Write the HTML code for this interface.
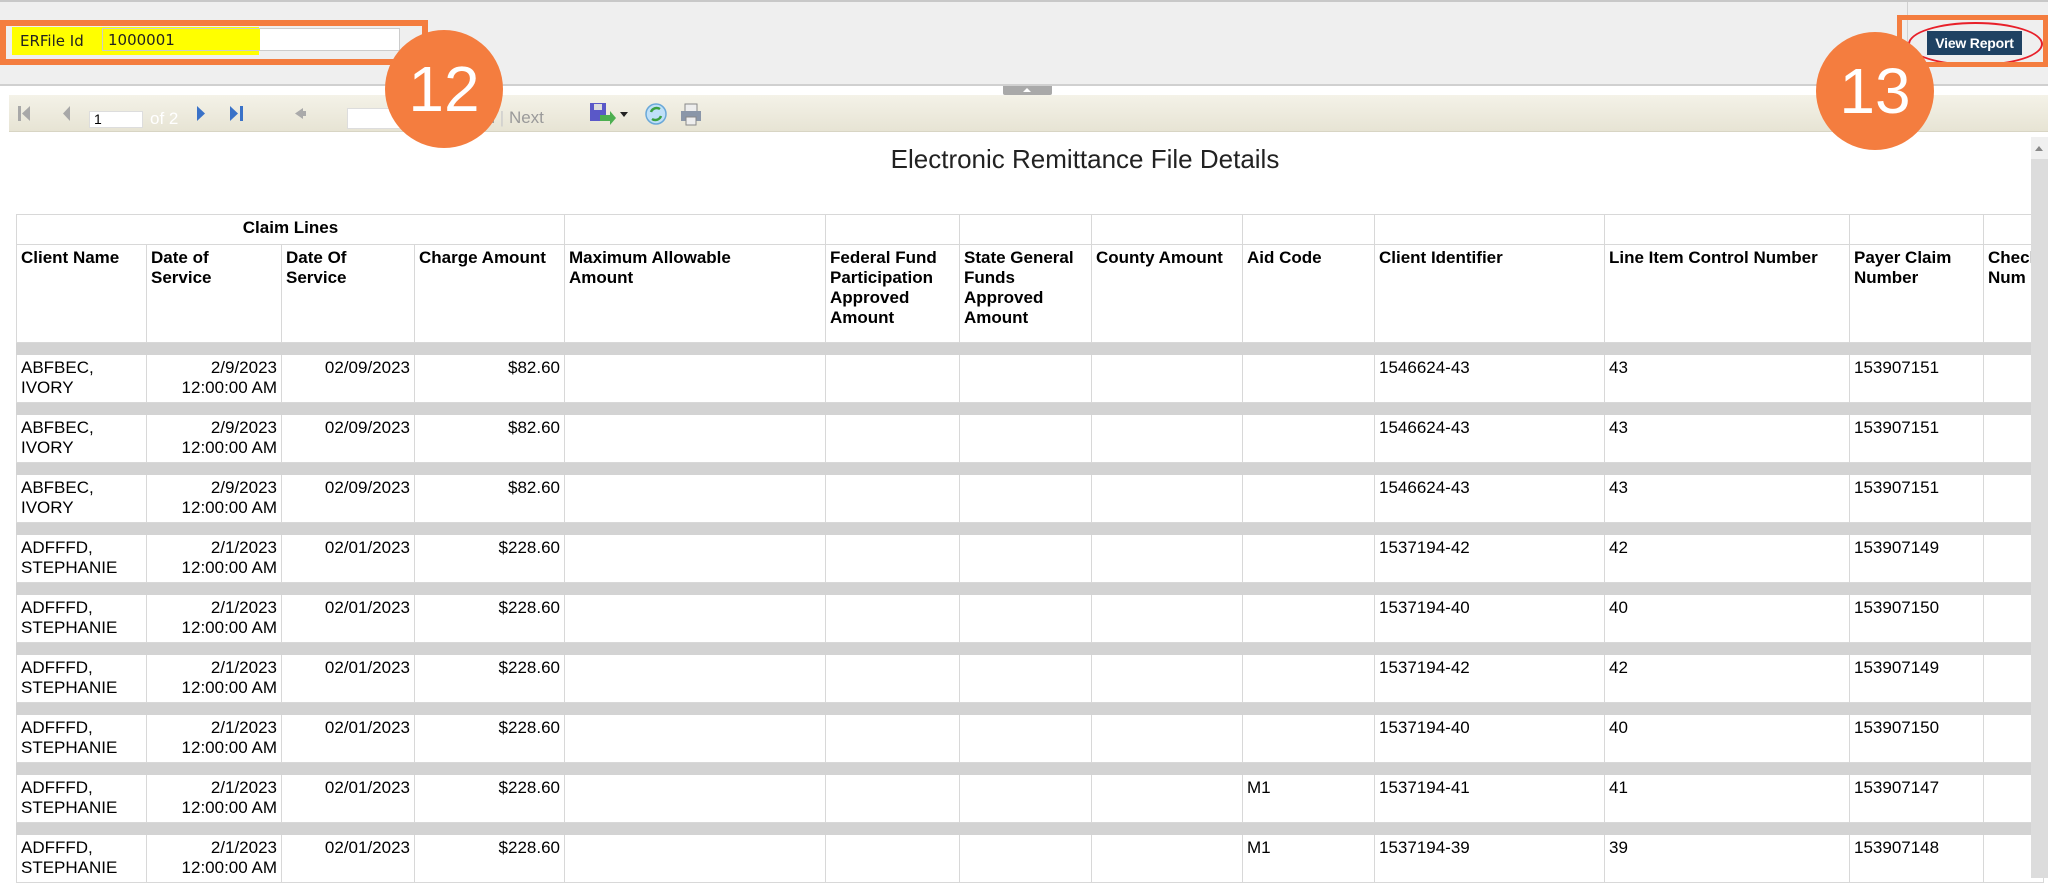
<!DOCTYPE html>
<html><head><meta charset="utf-8">
<style>
*{margin:0;padding:0;box-sizing:border-box}
body{width:2048px;height:878px;overflow:hidden;background:#fff;font-family:"Liberation Sans",Arial,sans-serif;position:relative}
.abs{position:absolute}
table{border-collapse:collapse;table-layout:fixed;position:absolute;left:16px;top:214px;font-size:17px;color:#000}
td{border:1px solid #d8d8d8;vertical-align:top;padding:3px 4px;line-height:20px;overflow:hidden;white-space:nowrap}
th{border:1px solid #d8d8d8;vertical-align:top;padding:3px 4px;line-height:20px;text-align:left;font-weight:bold;overflow:hidden;white-space:nowrap}
tr.g td{background:#d3d3d3;height:12px;padding:0;border-color:#d3d3d3}
tr.d td{height:48px}
.r{text-align:right}
.circ{position:absolute;width:118px;height:118px;border-radius:50%;background:#f47d3f;color:#fff;font-size:64px;text-align:center;line-height:118px}
</style></head><body>
<div class="abs" style="left:0;top:0;width:2048px;height:86px;background:#efefef;border-top:2px solid #c8c8c8;border-bottom:2px solid #d0d0d0"></div>
<div class="abs" style="left:1907px;top:2px;width:1px;height:58px;background:#d0d0d0"></div>
<div class="abs" style="left:1003px;top:86px;width:49px;height:9px;background:#a9a9a9;border-radius:0 0 2px 2px"></div>
<div class="abs" style="left:1023px;top:88px;width:0;height:0;border-left:4px solid transparent;border-right:4px solid transparent;border-bottom:4px solid #fff"></div>
<div class="abs" style="left:12px;top:27px;width:247px;height:28px;background:#ffff00"></div>
<div class="abs" style="left:20px;top:29px;font-size:15px;line-height:24px;color:#222;font-family:'DejaVu Sans',sans-serif">ERFile Id</div>
<div class="abs" style="left:102px;top:28px;width:298px;height:23px;border:1px solid #ccc;background:linear-gradient(90deg,#ffff00 0,#ffff00 157px,#fff 157px)"></div>
<div class="abs" style="left:108px;top:29px;font-size:15px;line-height:22px;color:#222;font-family:'DejaVu Sans',sans-serif">1000001</div>
<div class="abs" style="left:0;top:20px;width:428px;height:45px;border:6px solid #f47d3f"></div>
<div class="abs" style="left:1927px;top:31px;width:95px;height:24px;background:#1f4263;color:#fff;font-size:14px;font-weight:bold;line-height:24px;text-align:center;white-space:nowrap;letter-spacing:-0.2px">View Report</div>
<div class="abs" style="left:1908px;top:22px;width:135px;height:44px;border:2px solid #e8202a;border-radius:50%"></div>
<div class="abs" style="left:1897px;top:15px;width:151px;height:52px;border:5px solid #f47d3f;border-right:none"></div>
<div class="abs" style="left:2043px;top:15px;width:5px;height:52px;background:#f47d3f"></div>
<div class="abs" style="left:9px;top:95px;width:2039px;height:37px;background:linear-gradient(#f4f2e8,#e7e4d4);border-bottom:1px solid #d8d5c4"></div>
<svg class="abs" style="left:0;top:95px" width="720" height="37">
<g fill="#a8a8a8"><rect x="18" y="11" width="3" height="15"/><polygon points="30,11 22,18.5 30,26"/><polygon points="70,11 63,18.5 70,26"/></g>
<g fill="#3a72c8"><polygon points="197,11 205,18.5 197,26"/><polygon points="230,11 238,18.5 230,26"/><rect x="240" y="11" width="3" height="15"/></g>
<polygon points="303,13 295,18.5 303,24" fill="#aaa"/><rect x="301" y="16" width="5" height="5" fill="#aaa"/>
<rect x="590" y="8" width="16" height="18" fill="#5a58c8"/><rect x="594" y="9" width="8" height="6" fill="#ddd"/><polygon points="600,20 610,20 610,16 616,23 610,30 610,26 600,26" fill="#4caf50"/>
<polygon points="620,17 628,17 624,22" fill="#222"/>
<circle cx="656" cy="19" r="10" fill="#bfe0f8" stroke="#6aa8d8" stroke-width="1.5"/><path d="M651 17 a6 6 0 0 1 9 -3 M661 21 a6 6 0 0 1 -9 3" stroke="#3aa040" stroke-width="2.5" fill="none"/>
<rect x="685" y="9" width="12" height="8" fill="#eee" stroke="#888"/><rect x="681" y="16" width="20" height="10" fill="#8a96a8"/><rect x="686" y="22" width="10" height="8" fill="#eee" stroke="#888"/>
</svg>
<div class="abs" style="left:89px;top:111px;width:54px;height:17px;background:#fff;border:1px solid #ddd;font-size:14px;line-height:15px;padding-left:4px">1</div>
<div class="abs" style="left:150px;top:108px;font-size:17px;color:#fff;line-height:22px">of 2</div>
<div class="abs" style="left:347px;top:108px;width:110px;height:21px;background:#fff;border:1px solid #ddd"></div>
<div class="abs" style="left:462px;top:107px;font-size:17px;color:#9a9a9a;line-height:22px">Find <span style="color:#ccc">|</span> Next</div>
<div class="circ" style="left:385px;top:30px">12</div>
<div class="circ" style="left:1816px;top:32px">13</div>
<div class="abs" style="left:0;top:143px;width:2170px;text-align:center;font-size:26px;color:#222;line-height:32px">Electronic Remittance File Details</div>
<table>
<colgroup><col style="width:130px"><col style="width:135px"><col style="width:133px"><col style="width:150px"><col style="width:261px"><col style="width:134px"><col style="width:132px"><col style="width:151px"><col style="width:132px"><col style="width:230px"><col style="width:245px"><col style="width:134px"><col style="width:60px"></colgroup>
<tr style="height:30px"><th colspan="4" style="text-align:center">Claim Lines</th><th></th><th></th><th></th><th></th><th></th><th></th><th></th><th></th><th></th></tr>
<tr style="height:98px"><th>Client Name</th><th>Date of<br>Service</th><th>Date Of<br>Service</th><th>Charge Amount</th><th>Maximum Allowable<br>Amount</th><th>Federal Fund<br>Participation<br>Approved<br>Amount</th><th>State General<br>Funds<br>Approved<br>Amount</th><th>County Amount</th><th>Aid Code</th><th>Client Identifier</th><th>Line Item Control Number</th><th>Payer Claim<br>Number</th><th>Check<br>Num</th></tr>
<tr class="g"><td colspan="13"></td></tr>
<tr class="d"><td>ABFBEC,<br>IVORY</td><td class="r">2/9/2023<br>12:00:00 AM</td><td class="r">02/09/2023</td><td class="r">$82.60</td><td></td><td></td><td></td><td></td><td></td><td>1546624-43</td><td>43</td><td>153907151</td><td></td></tr>
<tr class="g"><td colspan="13"></td></tr>
<tr class="d"><td>ABFBEC,<br>IVORY</td><td class="r">2/9/2023<br>12:00:00 AM</td><td class="r">02/09/2023</td><td class="r">$82.60</td><td></td><td></td><td></td><td></td><td></td><td>1546624-43</td><td>43</td><td>153907151</td><td></td></tr>
<tr class="g"><td colspan="13"></td></tr>
<tr class="d"><td>ABFBEC,<br>IVORY</td><td class="r">2/9/2023<br>12:00:00 AM</td><td class="r">02/09/2023</td><td class="r">$82.60</td><td></td><td></td><td></td><td></td><td></td><td>1546624-43</td><td>43</td><td>153907151</td><td></td></tr>
<tr class="g"><td colspan="13"></td></tr>
<tr class="d"><td>ADFFFD,<br>STEPHANIE</td><td class="r">2/1/2023<br>12:00:00 AM</td><td class="r">02/01/2023</td><td class="r">$228.60</td><td></td><td></td><td></td><td></td><td></td><td>1537194-42</td><td>42</td><td>153907149</td><td></td></tr>
<tr class="g"><td colspan="13"></td></tr>
<tr class="d"><td>ADFFFD,<br>STEPHANIE</td><td class="r">2/1/2023<br>12:00:00 AM</td><td class="r">02/01/2023</td><td class="r">$228.60</td><td></td><td></td><td></td><td></td><td></td><td>1537194-40</td><td>40</td><td>153907150</td><td></td></tr>
<tr class="g"><td colspan="13"></td></tr>
<tr class="d"><td>ADFFFD,<br>STEPHANIE</td><td class="r">2/1/2023<br>12:00:00 AM</td><td class="r">02/01/2023</td><td class="r">$228.60</td><td></td><td></td><td></td><td></td><td></td><td>1537194-42</td><td>42</td><td>153907149</td><td></td></tr>
<tr class="g"><td colspan="13"></td></tr>
<tr class="d"><td>ADFFFD,<br>STEPHANIE</td><td class="r">2/1/2023<br>12:00:00 AM</td><td class="r">02/01/2023</td><td class="r">$228.60</td><td></td><td></td><td></td><td></td><td></td><td>1537194-40</td><td>40</td><td>153907150</td><td></td></tr>
<tr class="g"><td colspan="13"></td></tr>
<tr class="d"><td>ADFFFD,<br>STEPHANIE</td><td class="r">2/1/2023<br>12:00:00 AM</td><td class="r">02/01/2023</td><td class="r">$228.60</td><td></td><td></td><td></td><td></td><td>M1</td><td>1537194-41</td><td>41</td><td>153907147</td><td></td></tr>
<tr class="g"><td colspan="13"></td></tr>
<tr class="d"><td>ADFFFD,<br>STEPHANIE</td><td class="r">2/1/2023<br>12:00:00 AM</td><td class="r">02/01/2023</td><td class="r">$228.60</td><td></td><td></td><td></td><td></td><td>M1</td><td>1537194-39</td><td>39</td><td>153907148</td><td></td></tr>
</table>
<div class="abs" style="left:2031px;top:137px;width:17px;height:741px;background:#dcdcdc;z-index:2"></div>
<div class="abs" style="left:2031px;top:137px;width:17px;height:22px;background:#f0f0f0;z-index:2"></div>
<div class="abs" style="left:2035px;top:146px;width:0;height:0;border-left:4px solid transparent;border-right:4px solid transparent;border-bottom:5px solid #888;z-index:3"></div>
</body></html>
